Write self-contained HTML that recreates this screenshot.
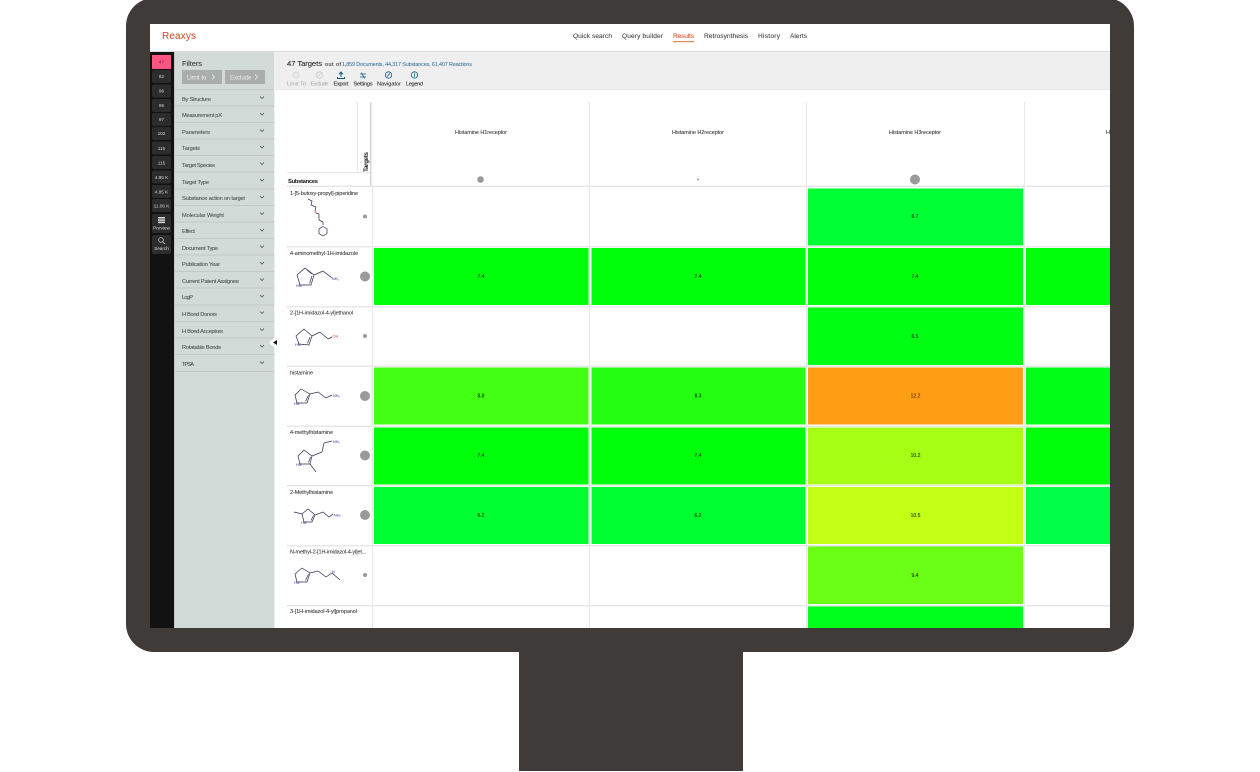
<!DOCTYPE html>
<html><head><meta charset="utf-8"><title>Reaxys</title>
<style>
html,body{margin:0;padding:0;background:#fff;width:1260px;height:772px;overflow:hidden}
svg{display:block}
text{font-family:"Liberation Sans",sans-serif}
.f{font-size:5.7px;fill:#4a4e4f;stroke:#4a4e4f;stroke-width:.08}
.n{font-size:6.600px;fill:#3e3e3e;stroke:#3e3e3e;stroke-width:.08}
.t{font-size:5.500px;fill:#333;stroke:#333;stroke-width:.06}
.s{font-size:5.500px;fill:#333;stroke:#333;stroke-width:.06}
.v{font-size:5px;fill:#0c3a0c;text-anchor:middle;stroke:#0c3a0c;stroke-width:.1}
.k{font-size:4.700px;fill:#d8d8d8;text-anchor:middle}
.b{font-size:5.600px;fill:#222;text-anchor:middle;stroke:#222;stroke-width:.06}
.g{font-size:5.600px;fill:#a6a6a6;text-anchor:middle}
.m{fill:none;stroke:#2c2c50;stroke-width:.7}
.a{font-size:3.800px;fill:#2a2a9a}
</style></head><body>
<svg width="1260" height="772" viewBox="0 0 1260 772" xmlns="http://www.w3.org/2000/svg">
<rect x="126" y="-2" width="1008" height="654" rx="28" fill="#3f3b39"/>
<rect x="519" y="651" width="224" height="120" fill="#3f3b39"/>
<rect x="150" y="24" width="960" height="604" fill="#fff"/>

<!-- header -->
<text x="162" y="39" style="font-size:10px" fill="#d4451f" textLength="34">Reaxys</text>
<text x="573" y="38" class="n" textLength="39">Quick search</text>
<text x="622" y="38" class="n" textLength="41">Query builder</text>
<text x="673" y="38" class="n" style="fill:#d8562a;stroke:#d8562a" textLength="21">Results</text>
<text x="704" y="38" class="n" textLength="44">Retrosynthesis</text>
<text x="758" y="38" class="n" textLength="22">History</text>
<text x="790" y="38" class="n" textLength="17">Alerts</text>
<rect x="673" y="41" width="21" height="1.2" fill="#e8825a"/>
<rect x="150" y="51" width="960" height="1" fill="#ddd"/>

<!-- dark rail -->
<rect x="150" y="52" width="24" height="576" fill="#121212"/>
<rect x="152" y="55" width="19" height="14" fill="#fa5583"/>
<text x="161.500" y="63.500" class="k" style="fill:#7a2038">47</text>
<g fill="#2c2c2c">
<rect x="152" y="70" width="19" height="13" rx="2"/>
<rect x="152" y="84.500" width="19" height="13" rx="2"/>
<rect x="152" y="99" width="19" height="13" rx="2"/>
<rect x="152" y="113" width="19" height="13" rx="2"/>
<rect x="152" y="127" width="19" height="13" rx="2"/>
<rect x="152" y="141.500" width="19" height="13" rx="2"/>
<rect x="152" y="156" width="19" height="13" rx="2"/>
<rect x="152" y="170.500" width="19" height="13" rx="2"/>
<rect x="152" y="185" width="19" height="13" rx="2"/>
<rect x="152" y="199" width="19" height="13" rx="2"/>
<rect x="152" y="214" width="19" height="19" rx="2"/>
<rect x="152" y="235" width="19" height="19" rx="2"/>
</g>
<text x="161.500" y="63.500" class="k" style="fill:#7a2038"> </text>
<text x="161.500" y="78" class="k">82</text>
<text x="161.500" y="92.500" class="k">96</text>
<text x="161.500" y="107" class="k">96</text>
<text x="161.500" y="121" class="k">97</text>
<text x="161.500" y="135" class="k">102</text>
<text x="161.500" y="150" class="k">115</text>
<text x="161.500" y="164.500" class="k">115</text>
<text x="161.500" y="179" class="k">4.85 K</text>
<text x="161.500" y="193.500" class="k">4.85 K</text>
<text x="161.500" y="207.500" class="k">11.06 K</text>
<g fill="#ddd"><rect x="158" y="217" width="7" height="1.500"/><rect x="158" y="219.300" width="7" height="1.500"/><rect x="158" y="221.600" width="7" height="1.500"/></g>
<text x="161.500" y="229.500" class="k" style="fill:#ddd">Preview</text>
<circle cx="161" cy="240" r="2.300" fill="none" stroke="#ddd" stroke-width=".7"/><path d="M162.700 241.700 165 244" stroke="#ddd" stroke-width=".7"/>
<text x="161.500" y="250" class="k" style="fill:#ddd">Search</text>

<!-- filter panel -->
<rect x="174" y="52" width="101" height="576" fill="#d3dbd8"/>
<rect x="174" y="52" width="1" height="576" fill="#bfc7c4"/>
<rect x="274" y="52" width="1" height="576" fill="#eef1f0"/>
<text x="182" y="66" style="font-size:7.400px;stroke:#333;stroke-width:.06" fill="#333" textLength="20">Filters</text>
<rect x="182" y="70" width="40" height="14" fill="#a9adac"/>
<rect x="225" y="70" width="40" height="14" fill="#a9adac"/>
<text x="187" y="79.500" style="font-size:6px" fill="#f0f0f0">Limit to</text>
<path d="M212 74.500 214.500 77 212 79.500" fill="none" stroke="#eee" stroke-width=".8"/>
<text x="230" y="79.500" style="font-size:6px" fill="#f0f0f0">Exclude</text>
<path d="M255 74.500 257.500 77 255 79.500" fill="none" stroke="#eee" stroke-width=".8"/>
<g stroke="#bcc5c2" stroke-width=".8">
<path d="M175 89.500H274M175 106H274M175 122.500H274M175 139H274M175 155.500H274M175 172H274M175 189H274M175 205.500H274M175 222H274M175 238.500H274M175 255H274M175 271.500H274M175 288H274M175 305H274M175 321.500H274M175 338H274M175 354.500H274M175 371.500H274"/>
</g>
<text x="182" y="101" class="f" textLength="29">By Structure</text>
<text x="182" y="117" class="f" textLength="40">Measurement pX</text>
<text x="182" y="134" class="f" textLength="28">Parameters</text>
<text x="182" y="150" class="f" textLength="18">Targets</text>
<text x="182" y="167" class="f" textLength="33">Target Species</text>
<text x="182" y="184" class="f" textLength="27">Target Type</text>
<text x="182" y="200" class="f" textLength="63">Substance action on target</text>
<text x="182" y="217" class="f" textLength="42">Molecular Weight</text>
<text x="182" y="233" class="f" textLength="13">Effect</text>
<text x="182" y="250" class="f" textLength="36">Document Type</text>
<text x="182" y="266" class="f" textLength="38">Publication Year</text>
<text x="182" y="283" class="f" textLength="57">Current Patent Assignee</text>
<text x="182" y="299" class="f" textLength="11">LogP</text>
<text x="182" y="316" class="f" textLength="35">H Bond Donors</text>
<text x="182" y="333" class="f" textLength="41">H Bond Acceptors</text>
<text x="182" y="349" class="f" textLength="39">Rotatable Bonds</text>
<text x="182" y="366" class="f" textLength="12">TPSA</text>
<path fill="none" stroke="#555" stroke-width=".8" d="M260 96.500l2 2 2-2M260 113l2 2 2-2M260 129.500l2 2 2-2M260 146l2 2 2-2M260 162.500l2 2 2-2M260 179l2 2 2-2M260 196l2 2 2-2M260 212.500l2 2 2-2M260 229l2 2 2-2M260 245.500l2 2 2-2M260 262l2 2 2-2M260 278.500l2 2 2-2M260 295l2 2 2-2M260 311.500l2 2 2-2M260 328.500l2 2 2-2M260 345l2 2 2-2M260 361.500l2 2 2-2"/>
<path d="M269 342.500 274 338V347Z" fill="#fff"/><rect x="274" y="337" width="4" height="11" fill="#fff"/>
<path d="M273 342.500 277 340V345Z" fill="#111"/>

<!-- toolbar -->
<rect x="275" y="52" width="835" height="37" fill="#efefef"/>
<rect x="275" y="89" width="835" height="1" fill="#e8e8e8"/>
<text x="287" y="66" style="font-size:7.600px;stroke:#222;stroke-width:.08" fill="#222" textLength="35">47 Targets</text>
<text x="325" y="66" style="font-size:5.500px;stroke:#222;stroke-width:.06" fill="#222" textLength="16">out of</text>
<text x="342" y="66" style="font-size:5.400px" fill="#1f6596" textLength="130">1,859 Documents, 44,317 Substances, 61,407 Reactions</text>
<g fill="none" stroke-width=".8">
<circle cx="296" cy="75" r="3" stroke="#ccc"/><path d="M296 73.500V75.500" stroke="#ccc"/>
<circle cx="319.500" cy="75" r="3.200" stroke="#ccc"/><path d="M317.300 77.200 321.700 72.800" stroke="#ccc"/>
<path d="M337.500 77V78.500H344.500V77M341 77V72.500M339 74.300 341 72 343 74.300" stroke="#11557f" stroke-width="1"/>
<path d="M360 74H366M360 77H366M361.500 72.500 363 75.500M363 75.500 364.500 78.500" stroke="#11557f"/>
<circle cx="388.500" cy="75" r="3.200" stroke="#11557f"/><path d="M387 76.500 390 73.500" stroke="#11557f"/>
<circle cx="414.500" cy="75" r="3.200" stroke="#11557f"/><path d="M414.500 73.500V77" stroke="#11557f"/>
</g>
<text x="296.500" y="85.500" class="g" textLength="19">Limit To</text>
<text x="319.500" y="85.500" class="g" textLength="18">Exclude</text>
<text x="341" y="85.500" class="b" textLength="15">Export</text>
<text x="363" y="85.500" class="b" textLength="19">Settings</text>
<text x="389" y="85.500" class="b" textLength="24">Navigator</text>
<text x="414.500" y="85.500" class="b" textLength="17">Legend</text>

<!-- grid lines -->
<g fill="#e8e8e8">
<rect x="357" y="102" width="1" height="70"/>
<rect x="370" y="102" width="1.500" height="85" fill="#d6d6d6"/>
<rect x="287" y="172" width="83" height="1"/>
<rect x="589" y="102" width="1" height="526"/>
<rect x="806" y="102" width="1" height="526"/>
<rect x="1024" y="102" width="1" height="526"/>
<rect x="372" y="187" width="1" height="441"/>
<rect x="287" y="185.500" width="823" height="1.500"/>
<rect x="287" y="246" width="823" height="1.500"/>
<rect x="287" y="306" width="823" height="1.500"/>
<rect x="287" y="365.500" width="823" height="1.500"/>
<rect x="287" y="425.500" width="823" height="1.500"/>
<rect x="287" y="485" width="823" height="1.500"/>
<rect x="287" y="545" width="823" height="1.500"/>
<rect x="287" y="605" width="823" height="1.500"/>
</g>
<text x="288" y="183" style="font-size:5.800px;font-weight:bold" fill="#111" textLength="30">Substances</text>
<text transform="translate(368 172) rotate(-90)" style="font-size:6.200px;font-weight:bold" fill="#222" textLength="20">Targets</text>
<text x="481" y="134" class="t" text-anchor="middle" textLength="52">Histamine H1receptor</text>
<text x="698" y="134" class="t" text-anchor="middle" textLength="52">Histamine H2receptor</text>
<text x="915" y="134" class="t" text-anchor="middle" textLength="52">Histamine H3receptor</text>
<text x="1106" y="134" class="t">Hi</text>
<g fill="#9a9a9a">
<circle cx="480.500" cy="179.500" r="3.300"/><circle cx="698" cy="179.500" r="1"/><circle cx="915" cy="179.500" r="5"/>
<circle cx="365" cy="216.500" r="2"/><circle cx="365" cy="276.500" r="5"/><circle cx="365" cy="336" r="2"/>
<circle cx="365" cy="396" r="5"/><circle cx="365" cy="455.500" r="5"/><circle cx="365" cy="515" r="5"/><circle cx="365" cy="575" r="2"/>
</g>

<!-- heat cells -->
<rect x="808" y="188.500" width="215" height="57" fill="#00ff33"/>
<rect x="374" y="248" width="214.500" height="57" fill="#00ff0b"/>
<rect x="591.500" y="248" width="214" height="57" fill="#00ff0b"/>
<rect x="808" y="248" width="215" height="57" fill="#00ff0b"/>
<rect x="1026" y="248" width="84" height="57" fill="#00ff0b"/>
<rect x="808" y="307.500" width="215" height="57.500" fill="#00ff12"/>
<rect x="374" y="367.500" width="214.500" height="57" fill="#43ff14"/>
<rect x="591.500" y="367.500" width="214" height="57" fill="#24ff14"/>
<rect x="808" y="367.500" width="215" height="57" fill="#ff9e14"/>
<rect x="1026" y="367.500" width="84" height="57" fill="#00ff18"/>
<rect x="374" y="427.500" width="214.500" height="57" fill="#00ff0b"/>
<rect x="591.500" y="427.500" width="214" height="57" fill="#00ff0b"/>
<rect x="808" y="427.500" width="215" height="57" fill="#a6ff14"/>
<rect x="1026" y="427.500" width="84" height="57" fill="#00ff0b"/>
<rect x="374" y="487" width="214.500" height="57" fill="#00ff30"/>
<rect x="591.500" y="487" width="214" height="57" fill="#00ff30"/>
<rect x="808" y="487" width="215" height="57" fill="#c3ff14"/>
<rect x="1026" y="487" width="84" height="57" fill="#00ff48"/>
<rect x="808" y="546.500" width="215" height="57.500" fill="#6aff14"/>
<rect x="808" y="606.500" width="215" height="21.500" fill="#00ff1a"/>
<text x="915" y="278" class="v">7.4</text>
<text x="915" y="218" class="v">6.7</text>
<text x="481" y="278" class="v">7.4</text><text x="698" y="278" class="v">7.4</text>
<text x="915" y="338" class="v">6.5</text>
<text x="481" y="397.500" class="v">8.8</text><text x="698" y="397.500" class="v">8.3</text><text x="915.500" y="397.500" class="v" style="fill:#4a2c00;stroke:#4a2c00">12.2</text>
<text x="481" y="457" class="v">7.4</text><text x="698" y="457" class="v">7.4</text><text x="915.500" y="457" class="v">10.2</text>
<text x="481" y="517" class="v">6.2</text><text x="698" y="517" class="v">6.2</text><text x="915.500" y="517" class="v">10.5</text>
<text x="915" y="577" class="v">9.4</text>

<!-- substances -->
<text x="290" y="195" class="s" textLength="68">1-[5-butoxy-propyl]-piperidine</text>
<text x="290" y="255" class="s" textLength="68">4-aminomethyl-1H-imidazole</text>
<text x="290" y="314.500" class="s" textLength="63">2-[1H-imidazol-4-yl]ethanol</text>
<text x="290" y="374.500" class="s" textLength="23">histamine</text>
<text x="290" y="434" class="s" textLength="43">4-methylhistamine</text>
<text x="290" y="494" class="s" textLength="43">2-Methylhistamine</text>
<text x="290" y="553.500" class="s" textLength="76">N-methyl-2-[1H-imidazol-4-yl]et...</text>
<text x="290" y="613" class="s" textLength="67">3-[1H-imidazol-4-yl]propanol</text>

<!-- molecules -->
<path class="m" d="M308 199 312 201 311 205 316 207 315 211M316 213 319 214 319 220 323 222 323 225"/>
<path class="m" d="M323 226.500 327 229 327 233.500 323 236 319 233.500 319 229Z"/>
<circle cx="315.500" cy="212" r=".9" fill="#d66"/>
<path class="m" d="M305 268 314 275 311 285 300 285 297 275ZM314 275 323 271 331.700 277.700"/>
<path class="m" d="M307 270 312 274M309.500 283.500 312 276"/>
<text x="332" y="280" class="a">NH₂</text><text x="296" y="287" class="a">HN</text>
<path class="m" d="M304 329 312 336 309 345 299 344 296 336ZM312 336 320 332 328 339 332 337"/>
<path class="m" d="M307.500 343.500 310 337"/>
<text x="332.500" y="337.500" class="a" style="fill:#d33">OH</text><text x="295" y="346" class="a">HN</text>
<path class="m" d="M301 389 310 394 307 403 297 403 295 395ZM310 394 318 392 326 398 332 395"/>
<path class="m" d="M305.500 401.500 308.500 395"/>
<text x="333" y="397" class="a">NH₂</text><text x="294" y="405" class="a">HN</text>
<path class="m" d="M304 450 312 456 310 464 300 464 298 456ZM312 456 322 452 324 443 332 441M310 464 316 472"/>
<path class="m" d="M308.500 462.500 310.500 457"/>
<text x="333" y="443" class="a">NH₂</text><text x="296" y="466" class="a">HN</text>
<path class="m" d="M308 509 315 515 312 522 304 522 302 514ZM302 514 294 512M315 515 323 512 329 517 333 514"/>
<path class="m" d="M311 520.500 313.500 515.500"/>
<text x="334" y="516.500" class="a">NH₂</text><text x="301" y="524" class="a">HN</text>
<path class="m" d="M302 568 310 573 307 582 297 582 295 574ZM310 573 318 571 326 577 332 573 340 580"/>
<path class="m" d="M305.500 580.500 308.500 574"/>
<text x="332" y="573" class="a">N</text><text x="294" y="584" class="a">HN</text>
</svg>
</body></html>
